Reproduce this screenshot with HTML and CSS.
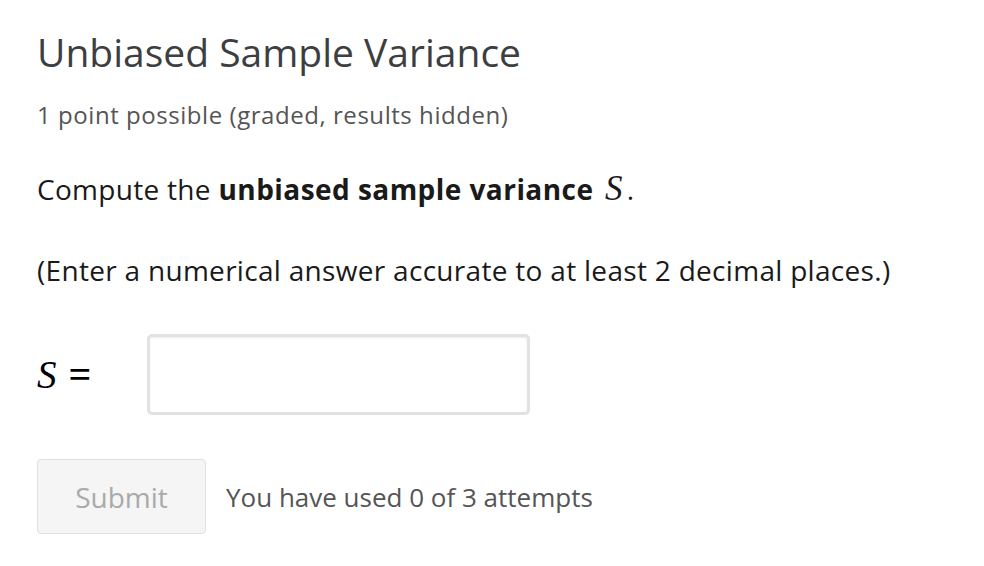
FILE: index.html
```html
<!DOCTYPE html>
<html lang="en">
<head>
  <meta charset="UTF-8" />
  <title>Unbiased Sample Variance</title>
  <link rel="stylesheet" href="styles.css">
</head>
<body>
  <div class="problem">
    <h2 class="problem-title">Unbiased Sample Variance</h2>
    <p class="points">1 point possible (graded, results hidden)</p>

    <p class="question">Compute the <strong>unbiased sample variance</strong> <span class="math">S</span>.</p>
    <p class="question">(Enter a numerical answer accurate to at least 2 decimal places.)</p>

    <div class="answer-row">
      <span class="math-label"><i>S</i><span class="eq">=</span></span>
      <input type="text" class="answer-input" />
    </div>

    <div class="actions">
      <button class="submit-btn" disabled>Submit</button>
      <span class="attempts">You have used 0 of 3 attempts</span>
    </div>
  </div>
</body>
</html>
```

FILE: styles.css
```css
body {
  margin: 0;
  background: #fff;
  font-family: "Open Sans", sans-serif;
  color: #313131;
}

.problem {
  padding: 25px 37px;
}

.problem-title {
  margin: 0;
  font-size: 39px;
  font-weight: 400;
  color: #3d3e3f;
  line-height: 54px;
}

.points {
  margin: 20px 0 0;
  font-size: 24px;
  letter-spacing: 0.55px;
  color: #555;
  line-height: 32px;
}

.question {
  margin: 0;
  font-size: 28px;
  letter-spacing: 0.3px;
  line-height: 38px;
  color: #1a1a1a;
}
.points + .question {
  margin-top: 39px;
}
.question + .question {
  margin-top: 43px;
}

.question strong {
  font-weight: 700;
  letter-spacing: 0.45px;
}

.math {
  font-family: "Liberation Serif", serif;
  font-style: italic;
  font-size: 35px;
  margin: 0 4px 0 4px;
}

.answer-row {
  display: flex;
  align-items: center;
  margin-top: 45px;
}

.math-label {
  font-family: "Liberation Serif", serif;
  font-size: 39px;
  width: 110px;
  color: #000;
}

.math-label i {
  font-weight: 400;
}

.math-label .eq {
  margin-left: 12px;
  font-size: 40px;
  font-weight: 700;
}

.answer-input {
  box-sizing: border-box;
  width: 383px;
  height: 81px;
  border: 3px solid #e2e2e2;
  border-radius: 5px;
  box-shadow: inset 0 1px 2px rgba(0,0,0,0.08);
  font-size: 24px;
}

.actions {
  display: flex;
  align-items: center;
  margin-top: 44px;
}

.submit-btn {
  box-sizing: border-box;
  width: 169px;
  height: 75px;
  background: #f5f5f5;
  border: 1px solid #e0e0e0;
  border-radius: 4px;
  font-family: "Open Sans", sans-serif;
  font-size: 28px;
  color: #aaa;
}

.attempts {
  margin-left: 20px;
  font-size: 26px;
  color: #555;
}
```
